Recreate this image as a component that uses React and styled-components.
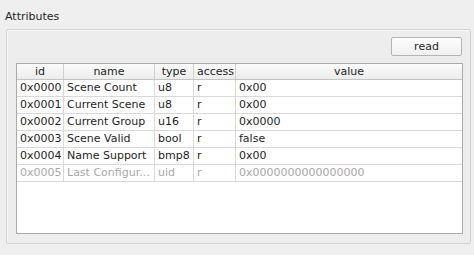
import React from 'react'
import styled, { createGlobalStyle } from 'styled-components'

const GlobalStyle = createGlobalStyle`
  html, body {
    margin: 0;
    padding: 0;
    background: #efefef;
  }
  body {
    font-family: "DejaVu Sans", "Liberation Sans", sans-serif;
    font-size: 11px;
    color: #1e1e1e;
  }
`

const Page = styled.div`
  width: 474px;
  height: 255px;
  box-sizing: border-box;
  padding-top: 9px;
  overflow: hidden;
`

const Title = styled.div`
  padding-left: 5px;
  height: 20px;
  line-height: 16px;
  font-size: 11px;
`

const Group = styled.div`
  margin: 0 3px 0 6px;
  height: 215px;
  box-sizing: border-box;
  border: 1px solid #d2d2d2;
  box-shadow: inset 1px 1px 0 #f8f8f8;
  border-radius: 2px;
  background: #ededed;
  padding: 7px 7px 9px 9px;
  display: flex;
  flex-direction: column;
  gap: 7px;
`

const Toolbar = styled.div`
  display: flex;
  justify-content: flex-end;
  padding-right: 1px;
`

const Button = styled.button`
  width: 71px;
  height: 19px;
  box-sizing: border-box;
  border: 1px solid #b4b4b4;
  border-radius: 2px;
  background: linear-gradient(#fdfdfd, #f0f0f0);
  font-family: inherit;
  font-size: 11px;
  color: #1e1e1e;
  padding: 0;
`

const Table = styled.div`
  flex: 1;
  box-sizing: border-box;
  border: 1px solid #ababab;
  background: #ffffff;
  display: flex;
  flex-direction: column;
`

const Row = styled.div`
  display: grid;
  grid-template-columns: 47px 91px 39px 42px 1fr;
  height: ${p => (p.$header ? 16 : 17)}px;
  box-sizing: border-box;
  border-bottom: 1px solid ${p => (p.$header ? '#c4c4c4' : '#d9d9d9')};
  background: ${p => (p.$header ? 'linear-gradient(#fbfbfb, #ececec)' : '#fff')};
  color: ${p => (p.$disabled ? '#a8a8a8' : '#1e1e1e')};
`

const Cell = styled.div`
  box-sizing: border-box;
  border-right: 1px solid ${p => (p.$header ? '#cfcfcf' : '#d9d9d9')};
  padding: 0 3px;
  line-height: 16px;
  white-space: nowrap;
  overflow: hidden;
  text-align: ${p => (p.$header ? 'center' : 'left')};
  &:last-child {
    border-right: none;
  }
`

const columns = ['id', 'name', 'type', 'access', 'value']

const rows = [
  ['0x0000', 'Scene Count', 'u8', 'r', '0x00'],
  ['0x0001', 'Current Scene', 'u8', 'r', '0x00'],
  ['0x0002', 'Current Group', 'u16', 'r', '0x0000'],
  ['0x0003', 'Scene Valid', 'bool', 'r', 'false'],
  ['0x0004', 'Name Support', 'bmp8', 'r', '0x00'],
  ['0x0005', 'Last Configur...', 'uid', 'r', '0x0000000000000000', true],
]

export default function App() {
  return (
    <Page>
      <GlobalStyle />
      <Title>Attributes</Title>
      <Group>
        <Toolbar>
          <Button>read</Button>
        </Toolbar>
        <Table>
          <Row $header>
            {columns.map(c => (
              <Cell $header key={c}>{c}</Cell>
            ))}
          </Row>
          {rows.map(r => (
            <Row key={r[0]} $disabled={r[5]}>
              {r.slice(0, 5).map((v, i) => (
                <Cell key={i}>{v}</Cell>
              ))}
            </Row>
          ))}
        </Table>
      </Group>
    </Page>
  )
}
